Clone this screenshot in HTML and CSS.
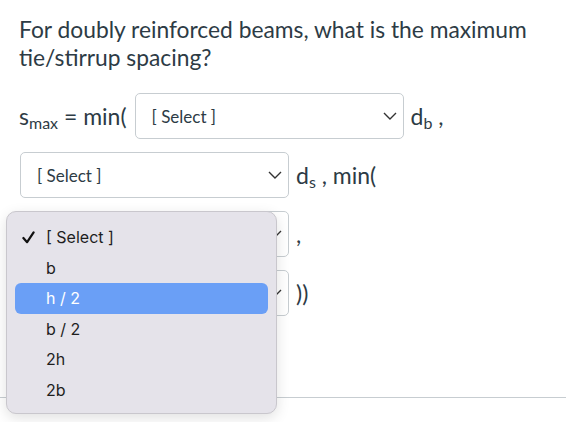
FILE: index.html
```html
<!DOCTYPE html>
<html>
<head>
<meta charset="utf-8">
<link rel="stylesheet" href="styles.css">
</head>
<body>
<div class="page">
  <p class="question">For doubly reinforced beams, what is the maximum tie/stirrup spacing?</p>
  <div class="formula">
    <div class="row">
      <span class="txt">s<sub>max</sub> = min(</span>
      <div class="sel"><span>[ Select ]</span><svg class="chev" viewBox="0 0 14 8" width="14" height="8"><path d="M1 1l6 6 6-6" fill="none" stroke="#333" stroke-width="1.4"/></svg></div>
      <span class="txt">d<sub>b</sub> ,</span>
    </div>
    <div class="row">
      <div class="sel"><span>[ Select ]</span><svg class="chev" viewBox="0 0 14 8" width="14" height="8"><path d="M1 1l6 6 6-6" fill="none" stroke="#333" stroke-width="1.4"/></svg></div>
      <span class="txt">d<sub>s</sub> , min(</span>
    </div>
    <div class="row">
      <div class="sel"><span>[ Select ]</span><svg class="chev" viewBox="0 0 14 8" width="14" height="8"><path d="M1 1l6 6 6-6" fill="none" stroke="#333" stroke-width="1.4"/></svg></div>
      <span class="txt">,</span>
    </div>
    <div class="row">
      <div class="sel"><span>[ Select ]</span><svg class="chev" viewBox="0 0 14 8" width="14" height="8"><path d="M1 1l6 6 6-6" fill="none" stroke="#333" stroke-width="1.4"/></svg></div>
      <span class="txt">))</span>
    </div>
  </div>
  <hr class="rule">
  <ul class="menu">
    <li class="item checked"><svg class="check" viewBox="0 0 14 14" width="13" height="13"><path d="M1.5 7.5l4 4.5 7-10.5" fill="none" stroke="#111" stroke-width="2.4" stroke-linecap="round" stroke-linejoin="round"/></svg>[ Select ]</li>
    <li class="item">b</li>
    <li class="item active">h / 2</li>
    <li class="item">b / 2</li>
    <li class="item">2h</li>
    <li class="item">2b</li>
  </ul>
</div>
</body>
</html>
```
FILE: styles.css
```css
html, body {
  margin: 0;
  padding: 0;
  background: #fff;
}
.page {
  position: relative;
  width: 566px;
  height: 422px;
  overflow: hidden;
  font-family: Lato, "Liberation Sans", sans-serif;
  color: #2d3b45;
}
.question {
  margin: 0;
  padding: 15px 19px 0 19px;
  font-size: 22.8px;
  line-height: 28px;
  color: #2d3b45;
}
.formula {
  padding: 22px 0 0 19px;
  display: flex;
  flex-direction: column;
  gap: 13px;
}
.row {
  display: flex;
  align-items: center;
  gap: 7px;
}
.txt {
  font-size: 23px;
  white-space: pre;
}
.txt sub {
  font-size: 16px;
  vertical-align: -4px;
  line-height: 0;
}
.sel {
  box-sizing: border-box;
  width: 269px;
  height: 46px;
  border: 1px solid #c7cdd1;
  border-radius: 5px;
  background: #fff;
  display: flex;
  align-items: center;
  justify-content: space-between;
  padding: 0 6px 0 16px;
  font-size: 17px;
  color: #2d3b45;
}
.row:first-child .sel {
  margin-left: 1px;
}
.row:not(:first-child) .sel {
  margin-left: 1px;
}
.chev {
  display: block;
}
.rule {
  margin: 0;
  position: absolute;
  left: 0;
  right: 0;
  top: 397px;
  border: 0;
  border-top: 1px solid #c7cdd1;
}
.menu {
  position: absolute;
  left: 6px;
  top: 211px;
  width: 271px;
  box-sizing: border-box;
  margin: 0;
  padding: 10px 8px 8px 8px;
  list-style: none;
  background: #e5e3ea;
  border: 1px solid #c9c7cd;
  border-radius: 10px;
  box-shadow: 0 4px 14px rgba(0,0,0,0.12);
  font-family: Inter, "Liberation Sans", sans-serif;
  font-size: 16px;
  color: #1e1e1e;
}
.item {
  position: relative;
  height: 30.5px;
  line-height: 30.5px;
  padding-left: 31px;
  border-radius: 6px;
}
.item.active {
  background: #6a9ff6;
  color: #fff;
}
.check {
  position: absolute;
  left: 7px;
  top: 9px;
}
```
